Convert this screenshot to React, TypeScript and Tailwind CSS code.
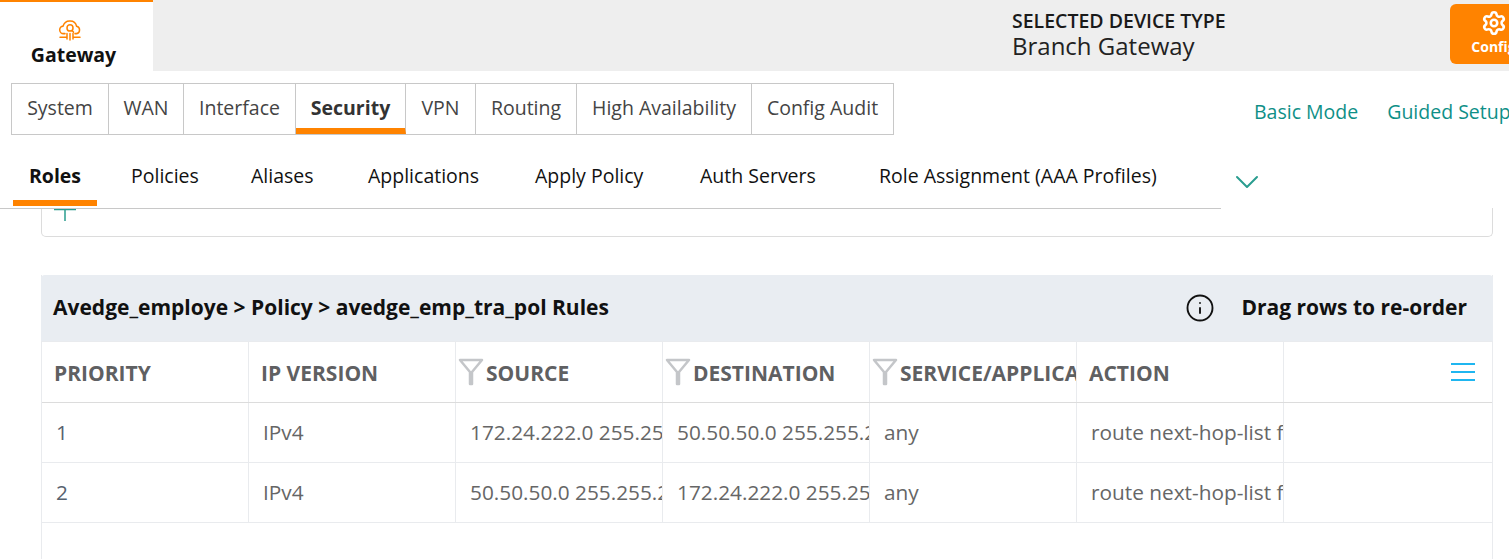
import React from 'react';
import { Settings, ChevronDown, Info } from 'lucide-react';

const mainTabs = [
  { label: 'System', w: 'w-[97px]' },
  { label: 'WAN', w: 'w-[75px]' },
  { label: 'Interface', w: 'w-[112px]' },
  { label: 'Security', w: 'w-[110px]', active: true },
  { label: 'VPN', w: 'w-[70px]' },
  { label: 'Routing', w: 'w-[101px]' },
  { label: 'High Availability', w: 'w-[175px]' },
  { label: 'Config Audit', w: 'w-[141px]' },
];

const subTabs = [
  { label: 'Roles', w: 'w-[84px]', active: true },
  { label: 'Policies', w: 'w-[120px]' },
  { label: 'Aliases', w: 'w-[117px]' },
  { label: 'Applications', w: 'w-[167px]' },
  { label: 'Apply Policy', w: 'w-[165px]' },
  { label: 'Auth Servers', w: 'w-[179px]' },
  { label: 'Role Assignment (AAA Profiles)', w: 'w-[342px]' },
];

const rows = [
  ['1', 'IPv4', '172.24.222.0 255.255.255.0', '50.50.50.0 255.255.255.0', 'any', 'route next-hop-list fw'],
  ['2', 'IPv4', '50.50.50.0 255.255.255.0', '172.24.222.0 255.255.255.0', 'any', 'route next-hop-list fw'],
];

const GatewayIcon = () => (
  <svg width="24" height="21" viewBox="0 0 24 20" preserveAspectRatio="none" fill="none" stroke="#ff8300" strokeWidth="1.5" strokeLinecap="round" strokeLinejoin="round" className="mr-[8px]">
    <path d="M7 13H5.5a3.6 3.6 0 0 1-.4-7.2A6.9 6.9 0 0 1 12 1a6.6 6.6 0 0 1 6.6 4.9A3.6 3.6 0 0 1 18.5 13H17" />
    <circle cx="12" cy="7.5" r="3" />
    <path d="M14.5 10.5l1 1" />
    <path d="M12 13v6M9 13v3.5H2M15 13v3.5h7M9 14v4M15 14v4" />
  </svg>
);

const FilterIcon = () => (
  <svg width="26" height="28" viewBox="0 0 26 28" fill="none" stroke="#c4c6c9" strokeWidth="2.5" className="shrink-0">
    <path d="M2 2h22L14 14v12h-2V14z" strokeLinejoin="round" />
  </svg>
);

const HeaderCell = ({ label, filter, w }: any) => (
  <div className={`${w} h-full border-r border-[#e9ebee] flex items-center overflow-hidden whitespace-nowrap shrink-0 ${filter ? 'pl-[2px] gap-[2px]' : 'pl-[12px]'}`}>
    {filter && <FilterIcon />}
    <span className="text-[21px] font-bold text-[#5f6062] mt-[4px]">{label}</span>
  </div>
);

export default function App() {
  return (
    <div className="w-[1509px] h-[559px] overflow-hidden bg-white flex flex-col" style={{ fontFamily: '"Open Sans", sans-serif' }}>
      {/* top bar */}
      <div className="h-[71px] bg-[#eeeeee] flex shrink-0">
        <div className="w-[153px] shrink-0 h-full bg-white border-t-2 border-[#ff8300] flex flex-col items-center pt-[18px] pr-[6px]">
          <GatewayIcon />
          <span className="text-[19.5px] leading-[24px] font-bold text-[#111] mt-[2px]">Gateway</span>
        </div>
        <div className="ml-[859px] pt-[9px] w-[438px] shrink-0 whitespace-nowrap">
          <div className="text-[19.5px] leading-[24px] font-semibold text-[#1a1a1a]">SELECTED DEVICE TYPE</div>
          <div className="text-[24px] leading-[26px] text-[#222]">Branch Gateway</div>
        </div>
        <div className="mt-[4px] w-[110px] h-[60px] shrink-0 bg-[#ff8300] rounded-[6px] flex flex-col items-start text-white">
          <div className="w-[87px] flex flex-col items-center">
            <Settings size={26} strokeWidth={2.4} className="mt-[6px]" />
            <span className="text-[14px] leading-[18px] font-bold mt-[2px]">Config</span>
          </div>
        </div>
      </div>

      {/* main tabs */}
      <div className="flex mt-[12px] pl-[11px] shrink-0 items-start">
        <div className="flex h-[52px] border border-[#c8c8c8]">
          {mainTabs.map((t) => (
            <div
              key={t.label}
              className={`${t.w} h-full flex items-center justify-center border-r border-[#c8c8c8] last:border-r-0 text-[19.5px] pb-[2px] ${t.active ? 'font-bold text-[#333] border-b-[6px] border-b-[#ff8300] pt-[6px]' : 'text-[#444]'}`}
            >
              {t.label}
            </div>
          ))}
        </div>
        <div className="ml-[360px] mt-[14px] flex gap-[29px] text-[19.5px] text-[#0e8f87] whitespace-nowrap">
          <span>Basic Mode</span>
          <span>Guided Setup</span>
        </div>
      </div>

      {/* sub tabs */}
      <div className="flex shrink-0 h-[74px] relative">
        <div className="w-[1221px] h-[74px] border-b border-[#c8c8c8] flex pl-[13px] shrink-0">
          {subTabs.map((t) => (
            <div key={t.label} className={`${t.w} shrink-0 whitespace-nowrap text-[19.5px] text-[#111] pt-[26px] ${t.active ? 'font-bold text-center border-b-[6px] border-[#ff8300] h-[71px]' : 'pl-[34px]'}`}>
              {t.label}
            </div>
          ))}
        </div>
        <ChevronDown size={40} strokeWidth={1.2} className="text-[#2a9d8f] ml-[6px] mt-[27px]" />
      </div>

      {/* panel above the table, scrolled under the tabs */}
      <div className="mx-[41px] w-[1452px] h-[29px] -mt-[1px] border border-t-0 border-[#dcdcdc] rounded-b-[5px] shrink-0 pl-[12px]">
        <svg width="22" height="13" viewBox="0 0 22 13" fill="none" stroke="#2a9d8f" strokeWidth="1.5" className="block">
          <path d="M0 1.5h22M11 1v12" />
        </svg>
      </div>

      {/* rules table */}
      <div className="mx-[41px] w-[1452px] mt-[38px] flex flex-col border-x border-[#e9ebee] flex-1 min-h-0 shrink-0">
        <div className="h-[66px] bg-[#e9edf2] rounded-t-[4px] flex items-center justify-between pl-[12px] pr-[26px] shrink-0 -mx-[1px]">
          <span className="text-[21px] font-bold text-[#111]">Avedge_employe &gt; Policy &gt; avedge_emp_tra_pol Rules</span>
          <div className="flex items-center gap-[26px]">
            <Info size={30} strokeWidth={1.5} className="text-[#111]" />
            <span className="text-[21px] font-bold text-[#111]">Drag rows to re-order</span>
          </div>
        </div>
        <div className="h-[62px] flex items-center border-y border-y-[#dcdcdc] border-t-[#e9ebee] shrink-0">
          <HeaderCell w="w-[207px]" label="PRIORITY" />
          <HeaderCell w="w-[207px]" label="IP VERSION" filter={false} />
          <HeaderCell w="w-[207px]" label="SOURCE" filter />
          <HeaderCell w="w-[207px]" label="DESTINATION" filter />
          <HeaderCell w="w-[207px]" label="SERVICE/APPLICATION" filter />
          <HeaderCell w="w-[207px]" label="ACTION" />
          <div className="flex-1 flex justify-end pr-[17px]">
            <svg width="24" height="18" viewBox="0 0 24 18" fill="none" stroke="#1fb6f0" strokeWidth="2">
              <path d="M0 1h24M0 9h24M0 17h24" />
            </svg>
          </div>
        </div>
        {rows.map((r) => (
          <div key={r[0]} className="h-[60px] flex border-b border-[#e9ebee] shrink-0">
            {r.map((c, i) => (
              <div key={i} className={`w-[207px] h-full shrink-0 border-r border-[#e9ebee] flex items-center overflow-hidden whitespace-nowrap text-[20.8px] pl-[14px] ${i === 0 ? 'text-[#57616e]' : 'text-[#666]'}`}>
                {c}
              </div>
            ))}
          </div>
        ))}
      </div>
    </div>
  );
}
